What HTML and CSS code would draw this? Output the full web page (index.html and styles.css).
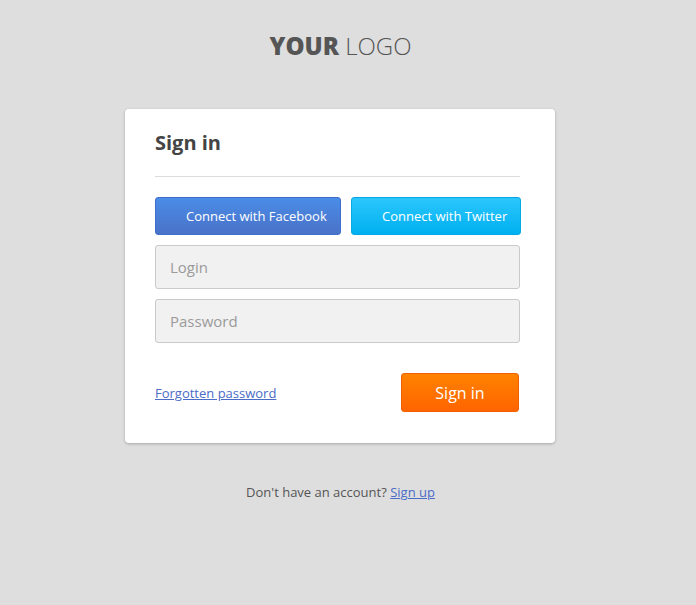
FILE: index.html
```html
<!DOCTYPE html>
<html>
<head>
<meta charset="utf-8">
<link rel="stylesheet" href="styles.css">
</head>
<body>
<div class="page">
  <div class="logo"><span class="logo-bold">YOUR</span> <span class="logo-light">LOGO</span></div>
  <div class="card">
    <h1 class="title">Sign in</h1>
    <div class="divider"></div>
    <div class="social">
      <button class="btn-social btn-fb">Connect with Facebook</button>
      <button class="btn-social btn-tw">Connect with Twitter</button>
    </div>
    <input class="field" type="text" placeholder="Login">
    <input class="field" type="password" placeholder="Password">
    <div class="actions">
      <a class="forgot" href="#">Forgotten password</a>
      <button class="btn-signin">Sign in</button>
    </div>
  </div>
  <div class="signup">Don't have an account? <a href="#">Sign up</a></div>
</div>
</body>
</html>
```
FILE: styles.css
```css
html, body {
  margin: 0;
  padding: 0;
  background: #dedede;
  font-family: "Open Sans", "Liberation Sans", sans-serif;
}
.page {
  display: flex;
  flex-direction: column;
  align-items: center;
  padding: 30px 16px 0 0;
}
.logo {
  font-size: 24px;
  line-height: 32px;
  color: #555;
  margin-left: 1px;
}
.logo-bold { font-weight: 800; }
.logo-light { font-weight: 300; }
.card {
  margin-top: 47px;
  width: 430px;
  box-sizing: border-box;
  background: #fff;
  border-radius: 4px;
  box-shadow: 0 1px 3px rgba(0,0,0,0.25);
  padding: 18px 35px 31px 30px;
  display: flex;
  flex-direction: column;
}
.title {
  margin: 0;
  font-size: 20px;
  font-weight: 700;
  color: #444;
  line-height: 32px;
}
.divider {
  height: 1px;
  background: #dcdcdc;
  margin-top: 17px;
  margin-bottom: 20px;
}
.social {
  display: flex;
  gap: 10px;
  margin-bottom: 10px;
  margin-right: -1px;
}
.btn-social {
  height: 38px;
  border-radius: 3px;
  color: #fff;
  font-family: inherit;
  font-size: 13px;
  text-align: left;
  padding: 0 0 0 30px;
  cursor: pointer;
}
.btn-fb {
  width: 186px;
  border: 1px solid #3f6fc8;
  background: linear-gradient(#4a8ce6, #4a72c9);
}
.btn-tw {
  flex: 1;
  border: 1px solid #06a8e6;
  background: linear-gradient(#2bc6fc, #00b0f0);
}
.field {
  height: 44px;
  box-sizing: border-box;
  border: 1px solid #cacaca;
  border-radius: 3px;
  background: #f1f1f1;
  padding: 0 14px;
  font-family: inherit;
  font-size: 15px;
  color: #555;
  margin: 0 0 10px 0;
  outline: none;
}
.field::placeholder { color: #9a9a9a; }
.actions {
  display: flex;
  justify-content: space-between;
  align-items: center;
  margin-top: 20px;
  padding-right: 1px;
}
.forgot {
  font-size: 13px;
  color: #4a6cc6;
  text-decoration: underline;
}
.btn-signin {
  width: 118px;
  height: 39px;
  border: 1px solid #f06000;
  border-radius: 3px;
  background: linear-gradient(#ff8200, #ff6400);
  color: #fff;
  font-family: inherit;
  font-size: 16px;
  cursor: pointer;
}
.signup {
  margin-top: 40px;
  font-size: 13px;
  color: #555;
  margin-left: 1px;
}
.signup a { color: #4a6cc6; }
```
